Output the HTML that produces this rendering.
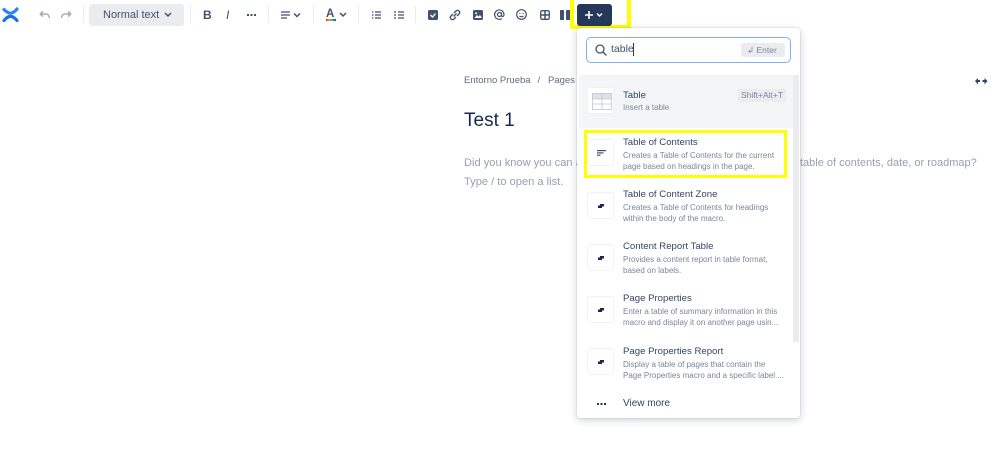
<!DOCTYPE html>
<html><head><meta charset="utf-8"><style>
html,body{margin:0;padding:0;background:#fff}
body{width:999px;height:459px;position:relative;overflow:hidden;font-family:"Liberation Sans",sans-serif;color:#253858}
.t{position:absolute;white-space:nowrap}
svg{position:absolute;overflow:visible}
.sep{position:absolute;top:5px;width:1px;height:18px;background:#ebecf0}
.ic{position:absolute;left:10px;width:27px;height:27px;box-sizing:border-box;border:1px solid #f1f2f4;border-radius:3px;background:#fff}
.n{position:absolute;left:46px;font-size:9.6px;color:#344563;white-space:nowrap}
.d{position:absolute;left:46px;font-size:8px;line-height:11px;color:#7a869a;white-space:nowrap}
</style></head><body>
<!-- logo -->
<svg style="left:0;top:0" width="22" height="26" viewBox="0 0 22 26" fill="none" stroke-width="3.200" stroke-linecap="round"><path d="M4 9.500C9 14.500 12.500 14.500 17 9" stroke="#2684ff"/><path d="M4 20.500C8.500 15 12.500 15 17 20.500" stroke="#1f6fe5"/></svg>
<!-- undo/redo -->
<svg style="left:38px;top:10px" width="34" height="10" viewBox="0 0 34 10" fill="none" stroke="#a5adba" stroke-width="1.500"><path d="M2 4h6c2 0 3 1 3.500 4M2 4l3-2.500M2 4l3 2.500"/><path d="M33 4h-6c-2 0-3 1-3.500 4M33 4l-3-2.500M33 4l-3 2.500"/></svg>
<div class="sep" style="left:83px"></div>
<div class="t" style="left:89px;top:4px;width:95px;height:22px;background:#ebecf0;border-radius:3px"></div>
<div class="t" style="left:103px;top:9px;font-size:11px;color:#42526e">Normal text</div>
<svg style="left:164px;top:12px" width="8" height="6" fill="none" stroke="#42526e" stroke-width="1.500"><path d="M1 1l3 3 3-3"/></svg>
<div class="sep" style="left:190px"></div>
<div class="t" style="left:203px;top:8px;font-size:12px;font-weight:bold;color:#42526e">B</div>
<div class="t" style="left:226px;top:8px;font-size:12px;font-style:italic;color:#42526e">I</div>
<svg style="left:247px;top:14px" width="10" height="3" fill="#42526e"><rect width="2" height="2"/><rect x="3.500" width="2" height="2"/><rect x="7" width="2" height="2"/></svg>
<div class="sep" style="left:268px"></div>
<svg style="left:281px;top:11px" width="22" height="9" fill="none" stroke="#42526e" stroke-width="1.300"><path d="M0 1h9M0 4h9M0 7h6"/><path stroke-width="1.500" d="M13 2.500l3 3 3-3"/></svg>
<div class="sep" style="left:313px"></div>
<div class="t" style="left:326px;top:8px;font-size:11.500px;color:#42526e;font-weight:bold">A</div>
<div class="t" style="left:326px;top:19px;width:10px;height:2px;background:linear-gradient(90deg,#de350b,#ff991f,#36b37e,#0052cc)"></div>
<svg style="left:339px;top:12px" width="8" height="6" fill="none" stroke="#42526e" stroke-width="1.500"><path d="M1 1l3 3 3-3"/></svg>
<div class="sep" style="left:358px"></div>
<svg style="left:372px;top:11px" width="32" height="9" fill="none" stroke="#42526e" stroke-width="1.300"><path d="M3 1h6M3 4h6M3 7h6M0 1h1.500M0 4h1.500M0 7h1.500"/><path d="M26 1h6M26 4h6M26 7h6M22 1h2M22 4h2M22 7h2"/></svg>
<div class="sep" style="left:415px"></div>
<svg style="left:428px;top:10px" width="10" height="10"><rect width="10" height="10" rx="1.500" fill="#42526e"/><path d="M2.500 5l2 2 3-3.500" fill="none" stroke="#fff" stroke-width="1.300"/></svg>
<svg style="left:450px;top:10px" width="10" height="10" fill="none" stroke="#42526e" stroke-width="1.400"><path d="M4 3l2-2c1-1 2-.8 3 0s1 2 0 3L7 6M6 7L4 9c-1 1-2 .8-3 0s-1-2 0-3l2-2M3.500 6.500l3-3"/></svg>
<svg style="left:473px;top:10px" width="10" height="10"><rect width="10" height="10" rx="1.500" fill="#42526e"/><circle cx="3" cy="3.200" r="1" fill="#fff"/><path d="M1.500 8l2.500-3 1.500 1.500L7 5l2 3z" fill="#fff"/></svg>
<svg style="left:494px;top:9px" width="11" height="11" fill="none" stroke="#42526e" stroke-width="1.200"><circle cx="5.500" cy="5.500" r="2"/><path d="M7.500 3.500v3c0 1.500 2.500 1.500 2.500-1A4.700 4.700 0 1 0 8 9.500"/></svg>
<svg style="left:516px;top:9px" width="11" height="11" fill="none" stroke="#42526e" stroke-width="1.200"><circle cx="5.500" cy="5.500" r="4.800"/><path d="M3.500 7c1 1 3 1 4 0M3.800 3.800v1M7.200 3.800v1"/></svg>
<svg style="left:540px;top:10px" width="10" height="10" fill="none" stroke="#42526e" stroke-width="1.300"><rect x=".7" y=".7" width="8.600" height="8.600" rx="1.500"/><path d="M5 .7v8.600M.7 5h8.600" stroke-width="1.500"/></svg>
<svg style="left:560px;top:10px" width="10" height="10" fill="#42526e"><rect width="4" height="10" rx=".5"/><rect x="6" width="4" height="10" rx=".5"/></svg>
<!-- plus -->
<div class="t" style="left:570px;top:-3px;width:53px;height:28px;border:4px solid #ffff00;border-top:0"></div>
<div class="t" style="left:577px;top:4px;width:35px;height:22px;background:#253858;border-radius:3px"></div>
<svg style="left:584px;top:10px" width="24" height="10" fill="none" stroke="#fff"><path stroke-width="1.600" d="M5 1v8M1 5h8"/><path stroke-width="1.400" d="M13 3.500l2.500 2.500 2.500-2.500"/></svg>
<!-- page -->
<div class="t" style="left:464px;top:75px;font-size:9.500px;color:#5e6c84">Entorno Prueba</div>
<div class="t" style="left:537.500px;top:75px;font-size:9.500px;color:#5e6c84">/</div>
<div class="t" style="left:548px;top:75px;font-size:9.500px;color:#5e6c84">Pages</div>
<div class="t" style="left:464px;top:110px;font-size:19px;color:#172b4d">Test 1</div>
<div class="t" style="left:464px;top:157px;font-size:11.100px;color:#97a0af">Did you know you can add</div>
<div class="t" style="left:800px;top:157px;font-size:11px;color:#97a0af">table of contents, date, or roadmap?</div>
<div class="t" style="left:464px;top:176px;font-size:11.100px;color:#97a0af">Type / to open a list.</div>
<svg style="left:975px;top:78px" width="13" height="7" fill="#344563"><path d="M0 3L3 0v2h2v2H3v2.500zM12.500 3L9.500 0v2H7.500v2h2v2.500z"/></svg>
<!-- popup -->
<div class="t" style="left:577px;top:28px;width:223px;height:390px;background:#fff;border-radius:3px;box-shadow:0 2px 8px rgba(9,30,66,.22),0 0 1px rgba(9,30,66,.3);overflow:hidden">
  <div style="position:absolute;left:9px;top:9px;width:203px;height:24px;border:1.500px solid #7fb0f5;border-radius:5px"></div>
  <svg style="left:18px;top:16px" width="12" height="12" fill="none" stroke="#42526e" stroke-width="1.300"><circle cx="5" cy="5" r="4"/><path d="M8 8l3.500 3.500"/></svg>
  <div class="t" style="left:34px;top:15px;font-size:10.500px;color:#42526e">table</div>
  <div class="t" style="left:56px;top:15px;width:1px;height:13px;background:#253858"></div>
  <div class="t" style="left:164px;top:15px;width:44px;height:14px;background:#ebecf0;border-radius:3px"></div>
  <div class="t" style="left:170px;top:17px;font-size:8.500px;color:#7a869a">&#8626; Enter</div>
  <!-- selected -->
  <div style="position:absolute;left:2px;top:47px;width:214px;height:53px;background:#f4f5f7;border-radius:2px"></div>
  <div style="position:absolute;left:216px;top:47px;width:6px;height:267px;background:#ececec"></div>
  <div class="ic" style="top:59px"></div>
  <svg style="left:15px;top:65px" width="20" height="17" fill="#fff" stroke="#c1c7d0" stroke-width=".8"><rect x=".4" y=".4" width="19.200" height="16.200"/><rect x=".4" y=".4" width="19.200" height="5.500" fill="#dfe1e6"/><path d="M10 .4v16.200M.4 11h19.200" fill="none"/></svg>
  <div class="n" style="top:62px">Table</div>
  <div class="d" style="top:74px">Insert a table</div>
  <div class="t" style="left:161px;top:61px;height:13px;line-height:13px;padding:0 3px;background:#ebecf0;border-radius:2px;font-size:8.500px;color:#7a869a">Shift+Alt+T</div>

  <div class="ic" style="top:111px"></div>
  <svg style="left:20px;top:122px" width="9" height="6" fill="#42526e"><rect width="9" height="1.200"/><rect y="2.300" width="6.500" height="1.200"/><rect y="4.600" width="3.500" height="1.200"/></svg>
  <div class="n" style="top:109px">Table of Contents</div>
  <div class="d" style="top:122px">Creates a Table of Contents for the current<br>page based on headings in the page.</div>
  <div style="position:absolute;left:7px;top:102px;width:197px;height:42px;border:3.500px solid #ffff00"></div>

  <div class="ic" style="top:164px"></div>
  <svg style="left:21px;top:176px" width="6" height="4" fill="#172b4d"><path d="M0 1.500h2V0h4v2.500H4V4H0z"/></svg>
  <div class="n" style="top:161px">Table of Content Zone</div>
  <div class="d" style="top:174px">Creates a Table of Contents for headings<br>within the body of the macro.</div>

  <div class="ic" style="top:216px"></div>
  <svg style="left:21px;top:228px" width="6" height="4" fill="#172b4d"><path d="M0 1.500h2V0h4v2.500H4V4H0z"/></svg>
  <div class="n" style="top:213px">Content Report Table</div>
  <div class="d" style="top:226px">Provides a content report in table format,<br>based on labels.</div>

  <div class="ic" style="top:268px"></div>
  <svg style="left:21px;top:280px" width="6" height="4" fill="#172b4d"><path d="M0 1.500h2V0h4v2.500H4V4H0z"/></svg>
  <div class="n" style="top:265px">Page Properties</div>
  <div class="d" style="top:278px">Enter a table of summary information in this<br>macro and display it on another page usin...</div>

  <div class="ic" style="top:320px"></div>
  <svg style="left:21px;top:332px" width="6" height="4" fill="#172b4d"><path d="M0 1.500h2V0h4v2.500H4V4H0z"/></svg>
  <div class="n" style="top:318px">Page Properties Report</div>
  <div class="d" style="top:331px">Display a table of pages that contain the<br>Page Properties macro and a specific label....</div>

  <svg style="left:20px;top:375px" width="10" height="3" fill="#253858"><rect width="2" height="2"/><rect x="3.500" width="2" height="2"/><rect x="7" width="2" height="2"/></svg>
  <div class="n" style="top:370px;font-size:10px">View more</div>
</div>
</body></html>
